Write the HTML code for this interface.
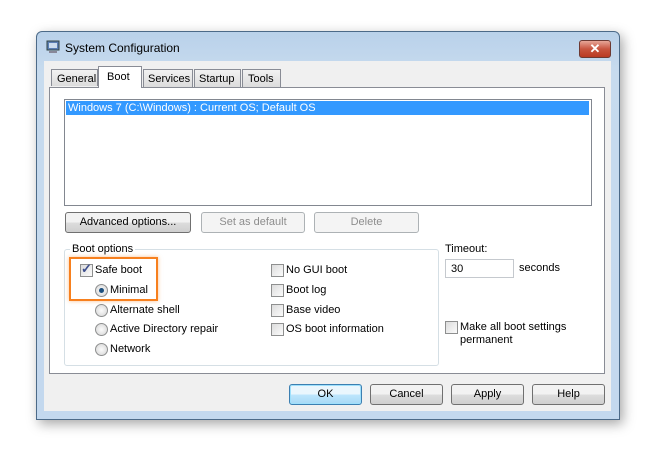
<!DOCTYPE html><html><head><style>
body{margin:0;width:651px;height:457px;background:#fff;font-family:"Liberation Sans",sans-serif;font-size:11px;color:#000;position:relative;overflow:hidden}
.a{position:absolute}
.btn{position:absolute;height:19px;border:1px solid #707070;border-radius:3px;background:linear-gradient(#f2f2f2 50%,#dddddd 50%,#cfcfcf);text-align:center;line-height:19px;box-sizing:content-box}
.dis{border-color:#adb2b5;background:#f4f4f4;color:#8d8d8d}
.cb{position:absolute;width:11px;height:11px;border:1px solid #8e8f8f;background:linear-gradient(135deg,#dcdcdc,#fbfbfb)}
.rb{position:absolute;width:11px;height:11px;border:1px solid #8e8f8f;border-radius:50%;background:radial-gradient(#fbfbfb,#d4d4d4)}
</style></head><body>
<div class="a" style="left:36px;top:31px;width:582px;height:387px;border:1px solid #4c6a88;border-radius:6px 6px 0 0;background:linear-gradient(#b9d1ea,#c7dbee 40px,#c3d8ee);box-shadow:3px 4px 12px rgba(0,0,0,.35)"></div>
<svg class="a" style="left:46px;top:40px" width="14" height="14"><rect x="1" y="1" width="12" height="9" fill="#5b7fb5" stroke="#344" /><rect x="3" y="3" width="8" height="5" fill="#cde"/><rect x="3" y="11" width="8" height="2" fill="#889"/></svg>
<div class="a" style="left:65px;top:41px;font-size:12px">System Configuration</div>
<div class="a" style="left:579px;top:40px;width:30px;height:16px;border:1px solid #6d3a33;border-radius:3px;background:linear-gradient(#e7a697,#c8553f 50%,#b93a22);color:#fff;text-align:center;font-weight:bold;font-size:13px;line-height:16px">✕</div>
<div class="a" style="left:44px;top:61px;width:567px;height:350px;background:#f0f0f0"></div>
<div class="a" style="left:49px;top:87px;width:554px;height:285px;border:1px solid #898c95;background:#fff"></div>
<div class="a" style="left:51px;top:69px;width:46px;height:17px;border:1px solid #898c95;border-bottom:none;background:linear-gradient(#f2f2f2,#dcdcdc);line-height:18px;padding-left:5px;box-sizing:border-box;width:47px">General</div>
<div class="a" style="left:98px;top:66px;width:44px;height:22px;border:1px solid #898c95;border-bottom:none;background:#fff;line-height:20px;padding-left:8px;box-sizing:border-box">Boot</div>
<div class="a" style="left:143px;top:69px;width:50px;height:18px;border:1px solid #898c95;border-bottom:none;background:linear-gradient(#f2f2f2,#dcdcdc);line-height:18px;padding-left:4px;box-sizing:border-box">Services</div>
<div class="a" style="left:194px;top:69px;width:47px;height:18px;border:1px solid #898c95;border-bottom:none;background:linear-gradient(#f2f2f2,#dcdcdc);line-height:18px;padding-left:4px;box-sizing:border-box">Startup</div>
<div class="a" style="left:242px;top:69px;width:39px;height:18px;border:1px solid #898c95;border-bottom:none;background:linear-gradient(#f2f2f2,#dcdcdc);line-height:18px;padding-left:5px;box-sizing:border-box">Tools</div>
<div class="a" style="left:64px;top:99px;width:526px;height:105px;border:1px solid #828790;background:#fff"></div>
<div class="a" style="left:66px;top:101px;width:523px;height:14px;background:#3399ff;color:#fff;line-height:14px;padding-left:2px;box-sizing:border-box">Windows 7 (C:\Windows) : Current OS; Default OS</div>
<div class="btn" style="left:65px;top:212px;width:124px">Advanced options...</div>
<div class="btn dis" style="left:201px;top:212px;width:102px">Set as default</div>
<div class="btn dis" style="left:314px;top:212px;width:103px">Delete</div>
<div class="a" style="left:64px;top:249px;width:373px;height:115px;border:1px solid #d5dfe5;border-radius:3px"></div>
<div class="a" style="left:70px;top:243px;background:#fff;padding:0 2px">Boot options</div>
<div class="a" style="left:69px;top:257px;width:85px;height:40px;border:2px solid #f7801e;box-shadow:0 0 4px rgba(247,128,30,.5)"></div>
<div class="cb" style="left:80px;top:264px"></div><div class="a" style="left:81px;top:261px;color:#3d4e8c;font-size:13px;font-weight:bold">✓</div>
<div class="a" style="left:95px;top:264px">Safe boot</div>
<div class="rb" style="left:95px;top:284px"></div><div class="a" style="left:99px;top:288px;width:5px;height:5px;border-radius:50%;background:#1c4f7e"></div>
<div class="a" style="left:110px;top:284px">Minimal</div>
<div class="rb" style="left:95px;top:304px"></div><div class="a" style="left:110px;top:304px">Alternate shell</div>
<div class="rb" style="left:95px;top:323px"></div><div class="a" style="left:110px;top:323px">Active Directory repair</div>
<div class="rb" style="left:95px;top:343px"></div><div class="a" style="left:110px;top:343px">Network</div>
<div class="cb" style="left:271px;top:264px"></div><div class="a" style="left:286px;top:264px">No GUI boot</div>
<div class="cb" style="left:271px;top:284px"></div><div class="a" style="left:286px;top:284px">Boot log</div>
<div class="cb" style="left:271px;top:304px"></div><div class="a" style="left:286px;top:304px">Base video</div>
<div class="cb" style="left:271px;top:323px"></div><div class="a" style="left:286px;top:323px">OS boot information</div>
<div class="a" style="left:445px;top:243px">Timeout:</div>
<div class="a" style="left:445px;top:259px;width:67px;height:18px;border:1px solid #c5c9ce;background:#fff;line-height:18px;padding-left:5px;box-sizing:border-box;width:69px;height:19px">30</div>
<div class="a" style="left:519px;top:262px">seconds</div>
<div class="cb" style="left:445px;top:321px"></div>
<div class="a" style="left:460px;top:321px;line-height:13px">Make all boot settings<br>permanent</div>
<div class="btn" style="left:289px;top:384px;width:71px;border-color:#3c7fb1;background:linear-gradient(#eaf6fd 50%,#bee6fd 50%,#a7d9f5);box-shadow:inset 0 0 0 1px #9ee0fc">OK</div>
<div class="btn" style="left:370px;top:384px;width:71px">Cancel</div>
<div class="btn" style="left:451px;top:384px;width:71px">Apply</div>
<div class="btn" style="left:532px;top:384px;width:71px">Help</div>
</body></html>
